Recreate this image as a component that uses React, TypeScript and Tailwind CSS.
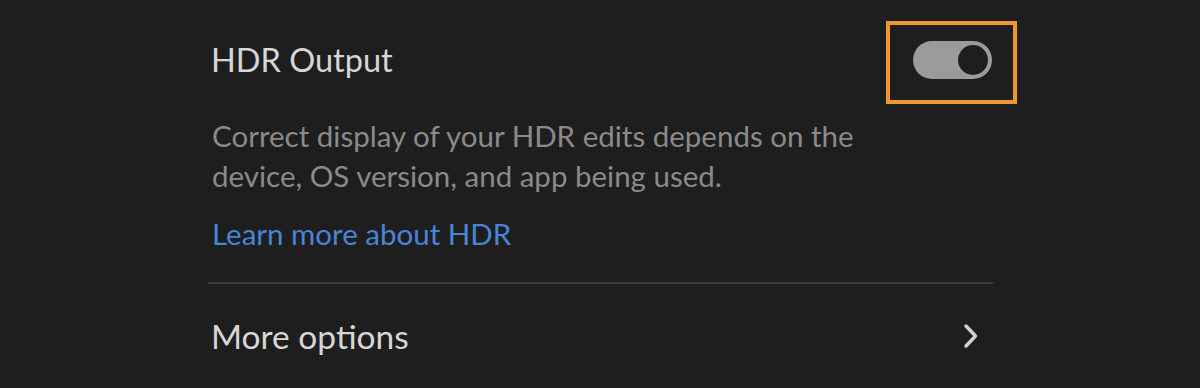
export default function App() {
  return (
    <div className="w-[1200px] h-[388px] bg-[#1e1e1e] overflow-hidden font-['Lato',sans-serif]">
      <div className="ml-[208px] w-[785px] flex flex-col">
        <div className="h-[120px] flex items-center justify-between">
          <span className="pl-[3px] text-[32.5px] text-[#d6d6d6]">HDR Output</span>
          <div className="relative mr-[1px]">
            <div className="absolute left-[-27px] right-[-25px] top-[-20px] bottom-[-25px] border-[4px] border-[#f0962e]" />
            <div className="w-[79px] h-[38px] rounded-full bg-[#9b9b9b] flex items-center justify-end pr-[4px]">
              <div className="w-[30px] h-[30px] rounded-full bg-[#1e1e1e]" />
            </div>
          </div>
        </div>
        <p className="-mt-[4px] pl-[4px] text-[29.5px] leading-[40px] text-[#8a8a8a] w-[720px]">
          Correct display of your HDR edits depends on the device, OS version, and app being used.
        </p>
        <a className="pl-[4px] mt-[18px] text-[29.5px] leading-[40px] text-[#4a84d8]">Learn more about HDR</a>
        <div className="mt-[28px] h-[2px] bg-[#3a3a3a]" />
        <div className="h-[104px] flex items-center justify-between">
          <span className="pl-[3px] text-[33.5px] text-[#d6d6d6]">More options</span>
          <svg width="16" height="26" viewBox="0 0 16 26" className="mr-[14px]">
            <path d="M3 3 L12.5 13 L3 23" fill="none" stroke="#d0d0d0" strokeWidth="3.5" strokeLinecap="round" strokeLinejoin="round" />
          </svg>
        </div>
      </div>
    </div>
  );
}
